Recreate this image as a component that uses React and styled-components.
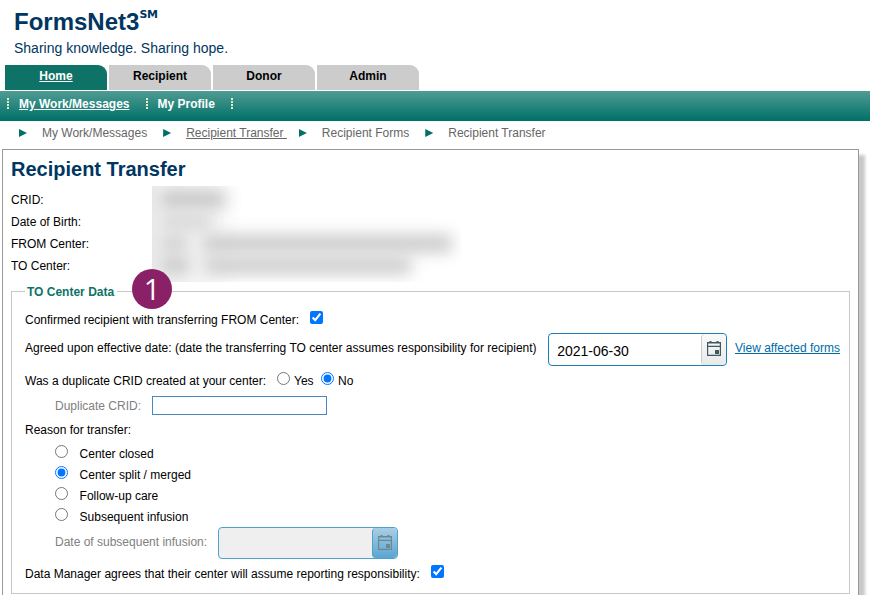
import React from "react";
import styled, { createGlobalStyle } from "styled-components";

const GlobalStyle = createGlobalStyle`
  * {
    box-sizing: border-box;
  }
  body {
    margin: 0;
    background: #fff;
    color: #000;
    font-family: "Liberation Sans", Arial, Helvetica, sans-serif;
    font-size: 12px;
    overflow: hidden;
  }
`;

const Page = styled.div`
  height: 595px;
  overflow: hidden;
`;

const Header = styled.header`
  height: 65px;
  padding: 8px 0 0 14px;
  color: #003660;
`;

const Brand = styled.h1`
  display: flex;
  margin: 0;
  font-size: 24px;
  line-height: 28px;
`;

const Mark = styled.span`
  font-family: "DejaVu Sans", sans-serif;
  font-size: 11px;
  line-height: 14px;
  letter-spacing: -0.3px;
`;

const Tagline = styled.div`
  margin-top: 3px;
  font-size: 14px;
  line-height: 18px;
`;

const Tabs = styled.nav`
  display: flex;
  gap: 2px;
  height: 26px;
  padding-left: 5px;
`;

const Tab = styled.a`
  width: 102px;
  height: 25px;
  border-top-right-radius: 9px;
  background: ${(props) => (props.$active ? "#0e7266" : "#ccc")};
  color: ${(props) => (props.$active ? "#fff" : "#000")};
  text-decoration: ${(props) => (props.$active ? "underline" : "none")};
  font-weight: bold;
  line-height: 22px;
  text-align: center;
`;

const SubNav = styled.nav`
  display: flex;
  height: 30px;
  padding: 6px 0 0 7px;
  background: linear-gradient(#4f9c94, #007067);
`;

const Dots = styled.span`
  width: 2px;
  height: 11px;
  margin-top: 1px;
  background: repeating-linear-gradient(#e0f0c0 0 2px, transparent 2px 3px);
`;

const SubLink = styled.a`
  margin: 0 16px 0 10px;
  color: #fff;
  font-weight: bold;
  line-height: 14px;
  text-decoration: ${(props) => (props.$active ? "underline" : "none")};
`;

const Crumbs = styled.div`
  display: flex;
  align-items: center;
  height: 28px;
  padding: 0 0 4px 18px;
  color: #666;
`;

const Crumb = styled.a`
  margin: 0 ${(props) => (props.$underlined ? 11 : 15)}px 0 15px;
  line-height: 14px;
  white-space: pre;
  text-decoration: ${(props) => (props.$underlined ? "underline" : "none")};
`;

const Arrow = styled.span`
  width: 8px;
  height: 8px;
  margin-left: 1px;
  background: #007067;
  clip-path: polygon(0 0, 100% 50%, 0 100%);
`;

const Panel = styled.main`
  width: 857px;
  height: 470px;
  margin-left: 2px;
  padding: 7px 8px 0;
  border: 1px solid #999;
  box-shadow: 6px 6px 3px #c8c8c8;
`;

const Title = styled.h2`
  margin: 0 0 8px;
  color: #003660;
  font-size: 20px;
  line-height: 24px;
`;

const Summary = styled.div`
  display: flex;
  height: 92px;
`;

const Labels = styled.div`
  width: 141px;
  line-height: 22px;
`;

const Redacted = styled.div`
  width: 309px;
  height: 96px;
  margin-top: -3px;
  padding: 5px 0 0 7px;
  overflow: hidden;
  background: linear-gradient(90deg, #ebebeb 0, #f2f2f2 10px, #f6f6f6 50px, #fff 90px);
`;

const Smudge = styled.div`
  display: flex;
  gap: 16px;
  height: 22px;
  padding-left: 2px;
  filter: blur(8px);
`;

const Bar = styled.span`
  width: ${(props) => props.$width}px;
  height: 17px;
  background: ${(props) => props.$color};
`;

const Fieldset = styled.section`
  width: 839px;
  height: 303px;
  margin-top: 10px;
  padding: 0 9px 0 13px;
  border: 1px solid #c8c8c8;
`;

const LegendRow = styled.div`
  display: flex;
  height: 16px;
  margin-top: -8px;
`;

const Legend = styled.span`
  height: 15px;
  padding: 0 3px 0 2px;
  background: #fff;
  color: #0e7266;
  font-weight: bold;
  line-height: 17px;
`;

const Badge = styled.span`
  width: 40px;
  height: 40px;
  margin: -15px 0 0 15px;
  border-radius: 50%;
  background: #8a2166;
  color: #fff;
  font-family: "Open Sans", sans-serif;
  font-size: 29px;
  line-height: 39px;
  text-align: center;
  z-index: 1;
`;

const Row = styled.div`
  display: flex;
  align-items: center;
  height: ${(props) => props.$height}px;
  padding-top: ${(props) => props.$drop || 0}px;
  padding-left: ${(props) => (props.$indent ? 30 : 0)}px;
  color: ${(props) => (props.$muted ? "#808080" : "#000")};
  white-space: nowrap;
`;

const Checkbox = styled.input.attrs({ type: "checkbox" })`
  width: 13px;
  height: 13px;
  margin: 0 0 ${(props) => props.$lift || 4}px 11px;
`;

const Radio = styled.input.attrs({ type: "radio" })`
  width: 13px;
  height: 13px;
  margin: 0 ${(props) => props.$after}px ${(props) => props.$lift || 4}px ${(props) => props.$before || 0}px;
`;

const Question = styled.span`
  margin-right: 11px;
`;

const DateLabel = styled.span`
  padding-bottom: 3px;
`;

const DateBox = styled.div`
  display: flex;
  width: 180px;
  height: ${(props) => (props.$disabled ? 32 : 33)}px;
  margin-left: ${(props) => (props.$disabled ? 11 : 11.6)}px;
  border: 1px solid ${(props) => (props.$disabled ? "#4f9fcf" : "#1a80b6")};
  border-radius: 4px;
  background: ${(props) => (props.$disabled ? "#efefef" : "#fff")};
  overflow: hidden;
`;

const DateValue = styled.span`
  flex: 1;
  padding: 1px 0 0 8px;
  font-size: 14px;
  line-height: 33px;
`;

const DateButton = styled.button`
  display: flex;
  align-items: center;
  justify-content: center;
  width: 25px;
  padding: 0 0 2px;
  border: 0;
  border-left: 1px solid ${(props) => (props.$disabled ? "#4f9fcf" : "#ccc")};
  border-radius: 4px;
  background: ${(props) =>
    props.$disabled ? "linear-gradient(#a9cfe4, #5ba5d0)" : "linear-gradient(#fafafa, #e9e9e9)"};
  color: ${(props) => (props.$disabled ? "#6b8994" : "#3b5b60")};
`;

const FormsLink = styled.a`
  margin-left: 8px;
  padding-bottom: 3px;
  color: #006ba6;
  text-decoration: underline;
`;

const TextBox = styled.input`
  width: 175px;
  height: 19px;
  margin-left: 11px;
  padding: 0 2px;
  border: 1px solid #4a87bf;
  background: #fff;
`;

const CalendarIcon = () => (
  <svg width="14" height="15" viewBox="0 0 14 15">
    <path
      fill="currentColor"
      d="M0 1h2.5V0h2v1h5V0h2v1H14v14H0zM1.2 2.4v2.4h11.6V2.4zM1.2 6v7.8h11.6V6zM8 9h4v4H8z"
      fillRule="evenodd"
    />
  </svg>
);

const reasons = ["Center closed", "Center split / merged", "Follow-up care", "Subsequent infusion"];

const App = () => {
  return (
    <>
      <GlobalStyle />
      <Page>
        <Header>
          <Brand>
            FormsNet3<Mark>SM</Mark>
          </Brand>
          <Tagline>Sharing knowledge. Sharing hope.</Tagline>
        </Header>
        <Tabs>
          <Tab $active>Home</Tab>
          <Tab>Recipient</Tab>
          <Tab>Donor</Tab>
          <Tab>Admin</Tab>
        </Tabs>
        <SubNav>
          <Dots />
          <SubLink $active>My Work/Messages</SubLink>
          <Dots />
          <SubLink>My Profile</SubLink>
          <Dots />
        </SubNav>
        <Crumbs>
          <Arrow />
          <Crumb>My Work/Messages</Crumb>
          <Arrow />
          <Crumb $underlined>{"Recipient Transfer "}</Crumb>
          <Arrow />
          <Crumb>Recipient Forms</Crumb>
          <Arrow />
          <Crumb>Recipient Transfer</Crumb>
        </Crumbs>
        <Panel>
          <Title>Recipient Transfer</Title>
          <Summary>
            <Labels>
              <div>CRID:</div>
              <div>Date of Birth:</div>
              <div>FROM Center:</div>
              <div>TO Center:</div>
            </Labels>
            <Redacted>
              <Smudge>
                <Bar $width={64} $color="#c4c4c4" />
              </Smudge>
              <Smudge>
                <Bar $width={52} $color="#d8d8d8" />
              </Smudge>
              <Smudge>
                <Bar $width={26} $color="#d0d0d0" />
                <Bar $width={249} $color="#c8c8c8" />
              </Smudge>
              <Smudge>
                <Bar $width={28} $color="#c8c8c8" />
                <Bar $width={206} $color="#cacaca" />
              </Smudge>
            </Redacted>
          </Summary>
          <Fieldset>
            <LegendRow>
              <Legend>TO Center Data</Legend>
              <Badge>1</Badge>
            </LegendRow>
            <Row $height={33} $drop={6}>
              Confirmed recipient with transferring FROM Center:
              <Checkbox defaultChecked />
            </Row>
            <Row $height={33}>
              <DateLabel>
                Agreed upon effective date: (date the transferring TO center assumes responsibility for recipient)
              </DateLabel>
              <DateBox>
                <DateValue>2021-06-30</DateValue>
                <DateButton>
                  <CalendarIcon />
                </DateButton>
              </DateBox>
              <FormsLink>View affected forms</FormsLink>
            </Row>
            <Row $height={30}>
              <Question>Was a duplicate CRID created at your center:</Question>
              <Radio name="duplicate" $after={4} $lift={6} />
              <span>Yes</span>
              <Radio name="duplicate" $before={7} $after={4.5} $lift={6} defaultChecked />
              <span>No</span>
            </Row>
            <Row $height={19} $indent $muted>
              Duplicate CRID:
              <TextBox />
            </Row>
            <Row $height={28} $drop={1}>
              Reason for transfer:
            </Row>
            {reasons.map((reason, i) => (
              <Row key={reason} $height={21} $indent>
                <Radio name="reason" $after={11.6} defaultChecked={i === 1} />
                {reason}
              </Row>
            ))}
            <Row $height={32} $indent $muted>
              <DateLabel>Date of subsequent infusion:</DateLabel>
              <DateBox $disabled>
                <DateValue />
                <DateButton $disabled>
                  <CalendarIcon />
                </DateButton>
              </DateBox>
            </Row>
            <Row $height={30}>
              Data Manager agrees that their center will assume reporting responsibility:
              <Checkbox $lift={6} defaultChecked />
            </Row>
          </Fieldset>
        </Panel>
      </Page>
    </>
  );
};

export default App;
